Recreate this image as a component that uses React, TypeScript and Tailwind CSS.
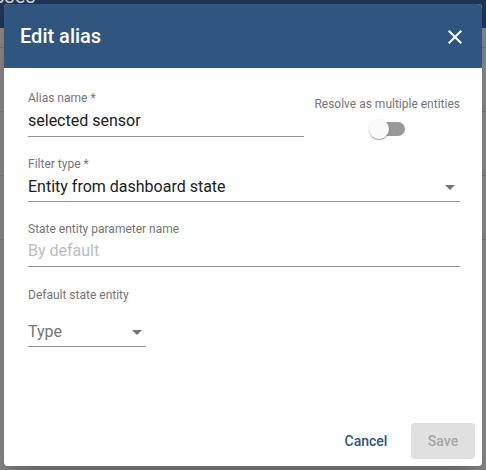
import React from "react";

function Arrow() {
  return (
    <svg width="10" height="5" viewBox="0 0 10 5" className="shrink-0">
      <polygon points="0,0 10,0 5,5" fill="#757575" />
    </svg>
  );
}

export default function App() {
  return (
    <div
      className="relative w-[486px] h-[470px] overflow-hidden bg-[#8a8a8a]"
      style={{ fontFamily: "Roboto, 'Liberation Sans', sans-serif" }}
    >
      <div className="h-[28px] bg-[#1f3553] overflow-hidden">
        <div className="-mt-[14px] -ml-[6px] text-[20px] leading-[20px] text-[#c8cfd8]">sses</div>
      </div>
      <div className="h-[20px] border-b border-[#777]" />
      <div className="h-[64px] border-b border-[#777]" />
      <div className="h-[64px] border-b border-[#777]" />
      <div className="h-[64px] border-b border-[#777]" />

      <div className="absolute left-[4px] top-[4px] w-[478px] h-[462px] rounded-[4px] bg-white flex flex-col overflow-hidden shadow-[0_11px_15px_-7px_rgba(0,0,0,0.2),0_24px_38px_3px_rgba(0,0,0,0.14)]">
        <div className="h-[64px] bg-[#305680] flex items-center justify-between pl-4 pr-[15px] shrink-0">
          <div className="text-[20px] leading-[24px] font-medium text-white">Edit alias</div>
          <svg width="24" height="24" viewBox="0 0 24 24" className="mt-[2px]">
            <path
              fill="#ffffff"
              d="M19 6.41L17.59 5 12 10.59 6.41 5 5 6.41 10.59 12 5 17.59 6.41 19 12 13.41 17.59 19 19 17.59 13.41 12z"
            />
          </svg>
        </div>

        <div className="pl-[24px] pr-[22px] pt-[23px] flex flex-col">
          <div className="flex">
            <div className="w-[276px] flex flex-col">
              <div className="text-[12px] leading-[14px] text-[#757575]">Alias name *</div>
              <div className="mt-[6px] text-[16px] leading-[20px] text-[#212121] pb-[5px] border-b border-[#949494]">
                selected sensor
              </div>
            </div>
            <div className="ml-auto flex flex-col items-center pt-[6px]">
              <div className="text-[12px] leading-[14px] text-[#757575]">Resolve as multiple entities</div>
              <div className="relative w-[36px] h-[20px] mt-[8px]">
                <div className="absolute left-[2px] top-[3px] w-[34px] h-[14px] rounded-full bg-[#9a9a9a]" />
                <div className="absolute left-0 top-0 w-[20px] h-[20px] rounded-full bg-[#fafafa] shadow-[0_2px_1px_-1px_rgba(0,0,0,0.2),0_1px_1px_0_rgba(0,0,0,0.14),0_1px_3px_0_rgba(0,0,0,0.12)]" />
              </div>
            </div>
          </div>

          <div className="mt-[18px] flex flex-col">
            <div className="text-[12px] leading-[14px] text-[#757575]">Filter type *</div>
            <div className="mt-[6px] flex items-center justify-between pb-[4px] border-b border-[#949494]">
              <span className="text-[16px] leading-[20px] text-[#212121]">Entity from dashboard state</span>
              <span className="mr-[5px] flex"><Arrow /></span>
            </div>
          </div>

          <div className="mt-[20px] flex flex-col">
            <div className="text-[12px] leading-[14px] text-[#757575]">State entity parameter name</div>
            <div className="mt-[5px] text-[16px] leading-[20px] text-[#bdbdbd] pb-[5px] border-b border-[#949494]">
              By default
            </div>
          </div>

          <div className="mt-[21px] flex flex-col">
            <div className="text-[12px] leading-[14px] text-[#757575]">Default state entity</div>
            <div className="mt-[20px] w-[118px] flex items-center justify-between pb-[4px] border-b border-[#949494]">
              <span className="text-[16px] leading-[20px] text-[#757575]">Type</span>
              <span className="mr-[4px] flex"><Arrow /></span>
            </div>
          </div>
        </div>

        <div className="mt-auto flex justify-end items-center pr-[7px] pb-[7px]">
          <div className="w-[64px] h-[36px] flex items-center justify-center text-[14px] font-medium text-[#305680] mr-[13px]">
            Cancel
          </div>
          <div className="w-[64px] h-[36px] rounded-[4px] bg-[#e0e0e0] flex items-center justify-center text-[14px] font-medium text-[#a6a6a6]">
            Save
          </div>
        </div>
      </div>
    </div>
  );
}
